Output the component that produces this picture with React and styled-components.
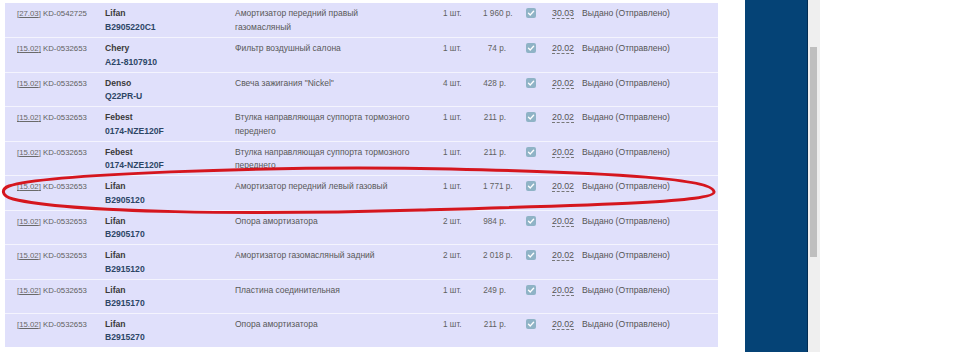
import React from 'react';
import styled, { createGlobalStyle } from 'styled-components';

const GlobalStyle = createGlobalStyle`
  html, body {
    margin: 0;
    padding: 0;
    background: #ffffff;
    overflow: hidden;
  }
  body {
    font-family: "Liberation Sans", Arial, sans-serif;
  }
`;

const rows = [
  { d: '27.03', order: 'KD-0542725', brand: 'Lifan', part: 'B2905220C1', name: ['Амортизатор передний правый', 'газомасляный'], qty: '1 шт.', price: '1 960 р.', date: '30.03' },
  { d: '15.02', order: 'KD-0532653', brand: 'Chery', part: 'A21-8107910', name: ['Фильтр воздушный салона'], qty: '1 шт.', price: '74 р.', date: '20.02' },
  { d: '15.02', order: 'KD-0532653', brand: 'Denso', part: 'Q22PR-U', name: ['Свеча зажигания "Nickel"'], qty: '4 шт.', price: '428 р.', date: '20.02' },
  { d: '15.02', order: 'KD-0532653', brand: 'Febest', part: '0174-NZE120F', name: ['Втулка направляющая суппорта тормозного', 'переднего'], qty: '1 шт.', price: '211 р.', date: '20.02' },
  { d: '15.02', order: 'KD-0532653', brand: 'Febest', part: '0174-NZE120F', name: ['Втулка направляющая суппорта тормозного', 'переднего'], qty: '1 шт.', price: '211 р.', date: '20.02' },
  { d: '15.02', order: 'KD-0532653', brand: 'Lifan', part: 'B2905120', name: ['Амортизатор передний левый газовый'], qty: '1 шт.', price: '1 771 р.', date: '20.02' },
  { d: '15.02', order: 'KD-0532653', brand: 'Lifan', part: 'B2905170', name: ['Опора амортизатора'], qty: '2 шт.', price: '984 р.', date: '20.02' },
  { d: '15.02', order: 'KD-0532653', brand: 'Lifan', part: 'B2915120', name: ['Амортизатор газомасляный задний'], qty: '2 шт.', price: '2 018 р.', date: '20.02' },
  { d: '15.02', order: 'KD-0532653', brand: 'Lifan', part: 'B2915170', name: ['Пластина соединительная'], qty: '1 шт.', price: '249 р.', date: '20.02' },
  { d: '15.02', order: 'KD-0532653', brand: 'Lifan', part: 'B2915270', name: ['Опора амортизатора'], qty: '1 шт.', price: '211 р.', date: '20.02' },
];

export default function App() {
  return (
    <>
      <GlobalStyle />
      <Page>
        <TableWrap>
          {rows.map((r, i) => (
            <Row key={i} $first={i === 0}>
              <Cell>
                <OrderDate>[{r.d}]</OrderDate> {r.order}
              </Cell>
              <Cell>
                <Brand>{r.brand}</Brand>
                <Part>{r.part}</Part>
              </Cell>
              <Desc>
                {r.name.map((n, j) => (
                  <div key={j}>{n}</div>
                ))}
              </Desc>
              <Qty>{r.qty}</Qty>
              <Price>{r.price}</Price>
              <CheckCell>
                <Check>
                  <svg width="8" height="8" viewBox="0 0 8 8">
                    <path d="M1.5 4.2 L3.3 5.9 L6.6 2.2" fill="none" stroke="#fff" strokeWidth="1.4" strokeLinecap="round" strokeLinejoin="round" />
                  </svg>
                </Check>
              </CheckCell>
              <Cell>
                <ShipDate>{r.date}</ShipDate>
              </Cell>
              <Status>Выдано (Отправлено)</Status>
            </Row>
          ))}
          <Mark width="720" height="60" viewBox="0 0 720 60">
            <path
              d="M8 17 C 40 6, 260 -4, 450 0 C 620 4, 712 10, 713 23 C 714 33, 600 36, 420 41 C 250 46, 70 44, 12 30 C 0 27, 0 20, 8 17 Z"
              fill="none"
              stroke="#d5161e"
              strokeWidth="3"
            />
          </Mark>
        </TableWrap>
        <SidePanel />
        <Scrollbar>
          <Thumb />
        </Scrollbar>
      </Page>
    </>
  );
}

const Page = styled.div`
  display: flex;
  height: 352px;
  width: 960px;
`;

const TableWrap = styled.div`
  position: relative;
  width: 713px;
  margin: 3px 0 0 5px;
  align-self: flex-start;
  background: #e0e0fb;
`;

const Row = styled.div`
  display: grid;
  grid-template-columns: 88px 130px 208px 40px 23px 46px 30px 1fr;
  height: 34.45px;
  box-sizing: border-box;
  padding: 4px 0 0 12px;
  border-top: ${p => (p.$first ? 'none' : '1px solid #f4f4fe')};
  font-size: 7.8px;
  line-height: 13.5px;
  color: #606060;
`;

const Cell = styled.div`
  white-space: nowrap;
`;

const Desc = styled.div`
  white-space: nowrap;
  font-size: 8.5px;
  color: #585858;
`;

const Qty = styled.div`
  white-space: nowrap;
  font-size: 8.2px;
`;

const OrderDate = styled.span`
  text-decoration: underline;
  color: #6a6a6a;
`;

const Brand = styled.div`
  font-weight: bold;
  font-size: 8.6px;
  color: #3a3a3a;
`;

const Part = styled.div`
  font-weight: bold;
  font-size: 8.6px;
  color: #2d4666;
`;

const Price = styled.div`
  text-align: right;
  white-space: nowrap;
  font-size: 8.2px;
`;

const CheckCell = styled.div`
  padding: 1px 0 0 20px;
`;

const Check = styled.span`
  display: flex;
  align-items: center;
  justify-content: center;
  width: 10px;
  height: 10px;
  border-radius: 2px;
  background: #8fb3c6;
`;

const ShipDate = styled.span`
  font-size: 8.8px;
  color: #555;
  border-bottom: 1px dashed #777;
`;

const Status = styled.div`
  font-size: 8.6px;
  white-space: nowrap;
  color: #555;
`;

const Mark = styled.svg`
  position: absolute;
  left: -4px;
  top: 166px;
  overflow: visible;
  pointer-events: none;
`;

const SidePanel = styled.div`
  width: 62px;
  margin-left: 27px;
  background: #054376;
  border-right: 1px solid #022c52;
`;

const Scrollbar = styled.div`
  width: 12px;
  background: #efefef;
  padding-top: 47px;
  box-sizing: border-box;
`;

const Thumb = styled.div`
  width: 7px;
  height: 210px;
  margin-left: 2px;
  background: #bfbfbf;
`;
